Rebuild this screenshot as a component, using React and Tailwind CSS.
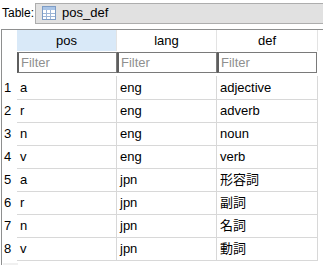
const rows = [
  ['a', 'eng', 'adjective'],
  ['r', 'eng', 'adverb'],
  ['n', 'eng', 'noun'],
  ['v', 'eng', 'verb'],
  ['a', 'jpn', '形容詞'],
  ['r', 'jpn', '副詞'],
  ['n', 'jpn', '名詞'],
  ['v', 'jpn', '動詞'],
];

const cols = 'grid grid-cols-[15px_100px_100px_101px]';

function TableIcon() {
  return (
    <svg width="16" height="16" viewBox="0 0 16 16">
      <rect x="1.5" y="1.5" width="13" height="13" fill="#fff" stroke="#7d9cc5" />
      <rect x="2" y="2" width="12" height="3" fill="#a9c4e6" />
      <path d="M2 8.5h12M2 11.5h12M5.5 5v9M9.5 5v9" stroke="#9db5d6" strokeWidth="1" />
    </svg>
  );
}

function Filter() {
  return (
    <div className="h-[21px] border border-[#7a7a7a] border-l-2 border-l-[#5e5e5e] bg-white pl-[2px] text-[#8f8f8f] leading-[19px]">
      Filter
    </div>
  );
}

export default function App() {
  return (
    <div className="w-[323px] h-[265px] overflow-hidden bg-white text-[13px] text-black font-['Liberation_Sans','Noto_Sans_CJK_JP',sans-serif]">
      {/* Table picker */}
      <div className="flex items-center h-[25px] pt-[1px]">
        <span className="w-[35px] pl-[2px] text-[12px]">Table:</span>
        <div className="flex flex-1 items-center gap-[5px] h-[21px] -mr-[4px] border border-[#adadad] bg-[#e1e1e1] pl-[5px]">
          <TableIcon />
          <span>pos_def</span>
        </div>
      </div>

      {/* Grid frame */}
      <div className="mt-[4px] ml-[1px] -mr-[4px] h-[240px] border border-[#8e8f8f] border-r-0">
        {/* Header */}
        <div className={`${cols} h-[21px] leading-[21px] text-center`}>
          <div />
          <div className="bg-[#d9e9f8] border-r border-[#e3e3e3]">pos</div>
          <div className="border-r border-[#e3e3e3]">lang</div>
          <div className="border-r border-[#e3e3e3]">def</div>
        </div>

        {/* Filters */}
        <div className={`${cols} h-[25px] pt-[1px]`}>
          <div />
          <Filter />
          <Filter />
          <div className="pr-[1px]">
            <Filter />
          </div>
        </div>

        {/* Rows */}
        {rows.map((r, i) => (
          <div key={i} className={`${cols} h-[23px] leading-[23px]`}>
            <div className="pl-[2px]">{i + 1}</div>
            {r.map((c, j) => (
              <div key={j} className="border-r border-b border-[#d8d8d8] pl-[3px]">
                {c}
              </div>
            ))}
          </div>
        ))}

        {/* corner below row header */}
        <div className="mt-[3px] ml-[1px] w-[15px] h-[4px] bg-[#f0f0f0]" />
      </div>
    </div>
  );
}
